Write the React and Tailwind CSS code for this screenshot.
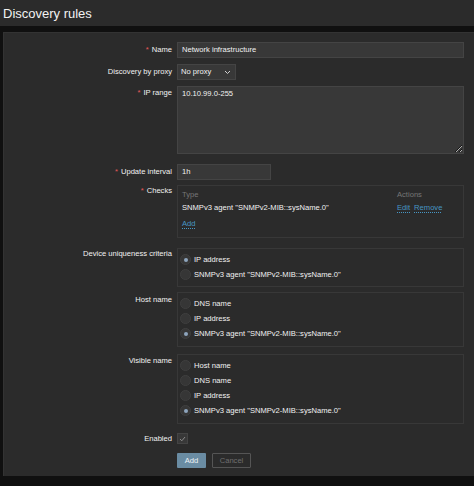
import React from "react";

const Req = () => <span className="text-[#e45959] mr-[3px]">*</span>;

const Radio = ({ checked, label }) => (
  <div className="flex items-center h-[15px]">
    <span className="w-[11px] h-[11px] rounded-full bg-[#363636] border border-[#3f3f3f] flex items-center justify-center mr-[3px]">
      {checked && <span className="w-[4px] h-[4px] rounded-full bg-[#8ea5bd]" />}
    </span>
    <span>{label}</span>
  </div>
);

const RadioBox = ({ items, selected, tight }) => (
  <div className={tight ? "border border-[#383838] pt-[3px] pb-[4px] pl-[2px]" : "border border-[#383838] pt-[3px] pb-[5px] pl-[2px]"}>
    {items.map((it, i) => (
      <Radio key={it} label={it} checked={i === selected} />
    ))}
  </div>
);

const App = () => {
  const snmp = 'SNMPv3 agent "SNMPv2-MIB::sysName.0"';

  return (
    <div
      className="w-[474px] h-[486px] bg-[#101010] text-[#f2f2f2] text-[7.6px] overflow-hidden"
      style={{ fontFamily: '"Liberation Sans", Arial, sans-serif' }}
    >
      {/* header */}
      <div className="h-[26px] bg-[#2b2b2b] px-[3px] flex items-center text-[13px] leading-none">
        Discovery rules
      </div>

      {/* form panel */}
      <div className="mt-[6px] ml-[3px] h-[444px] bg-[#2b2b2b] border-l border-t border-[#333333] pt-[9px] pr-[10px]">
        {/* Name */}
        <div className="flex">
          <div className="w-[173px] pr-[5px] text-right leading-[16px]">
            <Req />Name
          </div>
          <div className="flex-1 h-[16px] bg-[#383838] border border-[#444444] px-[4px] leading-[14px]">
            Network infrastructure
          </div>
        </div>

        {/* Proxy */}
        <div className="flex mt-[6px]">
          <div className="w-[173px] pr-[5px] text-right leading-[16px]">Discovery by proxy</div>
          <div className="w-[59px] h-[16px] bg-[#383838] border border-[#444444] pl-[3px] pr-[4px] flex items-center justify-between">
            <span>No proxy</span>
            <svg width="7" height="5" viewBox="0 0 7 5" fill="none">
              <path d="M1 1l2.5 2.5L6 1" stroke="#cfcfcf" strokeWidth="1" />
            </svg>
          </div>
        </div>

        {/* IP range */}
        <div className="flex mt-[6px]">
          <div className="w-[173px] pr-[5px] text-right leading-[14px]">
            <Req />IP range
          </div>
          <textarea
            readOnly
            defaultValue="10.10.99.0-255"
            className="flex-1 h-[68px] bg-[#383838] border border-[#444444] px-[4px] py-[1px] leading-[12px] text-[#f2f2f2] outline-none resize"
          />
        </div>

        {/* Update interval */}
        <div className="flex mt-[10px]">
          <div className="w-[173px] pr-[5px] text-right leading-[16px]">
            <Req />Update interval
          </div>
          <div className="w-[94px] h-[16px] bg-[#383838] border border-[#444444] px-[4px] leading-[14px]">1h</div>
        </div>

        {/* Checks */}
        <div className="flex mt-[5px]">
          <div className="w-[173px] pr-[5px] text-right leading-[12px]">
            <Req />Checks
          </div>
          <div className="flex-1 border border-[#383838] pt-[3px] pb-[5px] pl-[4px]">
            <div className="flex h-[11px] items-center text-[#767676]">
              <span className="w-[215px]">Type</span>
              <span>Actions</span>
            </div>
            <div className="flex h-[16px] items-center">
              <span className="w-[215px]">{snmp}</span>
              <span className="text-[#4796c4] underline decoration-dotted underline-offset-2">Edit</span>
              <span className="ml-[4px] text-[#4796c4] underline decoration-dotted underline-offset-2">Remove</span>
            </div>
            <div className="flex h-[16px] items-center">
              <span className="text-[#4796c4] underline decoration-dotted underline-offset-2">Add</span>
            </div>
          </div>
        </div>

        {/* Device uniqueness criteria */}
        <div className="flex mt-[10px]">
          <div className="w-[173px] pr-[5px] text-right leading-[12px]">Device uniqueness criteria</div>
          <div className="flex-1">
            <RadioBox items={["IP address", snmp]} selected={0} tight />
          </div>
        </div>

        {/* Host name */}
        <div className="flex mt-[5px]">
          <div className="w-[173px] pr-[5px] text-right leading-[12px] pt-[2px]">Host name</div>
          <div className="flex-1">
            <RadioBox items={["DNS name", "IP address", snmp]} selected={2} />
          </div>
        </div>

        {/* Visible name */}
        <div className="flex mt-[7px]">
          <div className="w-[173px] pr-[5px] text-right leading-[12px] pt-[1px]">Visible name</div>
          <div className="flex-1">
            <RadioBox items={["Host name", "DNS name", "IP address", snmp]} selected={3} />
          </div>
        </div>

        {/* Enabled */}
        <div className="flex mt-[9px]">
          <div className="w-[173px] pr-[5px] text-right leading-[11px]">Enabled</div>
          <div className="w-[11px] h-[11px] bg-[#383838] border border-[#444444] flex items-center justify-center">
            <svg width="7" height="6" viewBox="0 0 7 6" fill="none">
              <path d="M1 3l1.8 1.8L6 1" stroke="#8a8a8a" strokeWidth="1" />
            </svg>
          </div>
        </div>

        {/* Buttons */}
        <div className="flex mt-[9px]">
          <div className="w-[173px]" />
          <div className="w-[29px] h-[15px] bg-[#6a8ca3] text-[#eef3f6] flex items-center justify-center rounded-[1px]">
            Add
          </div>
          <div className="ml-[6px] w-[39px] h-[15px] border border-[#555555] text-[#6f6f6f] flex items-center justify-center rounded-[1px]">
            Cancel
          </div>
        </div>
      </div>
    </div>
  );
};

export default App;
